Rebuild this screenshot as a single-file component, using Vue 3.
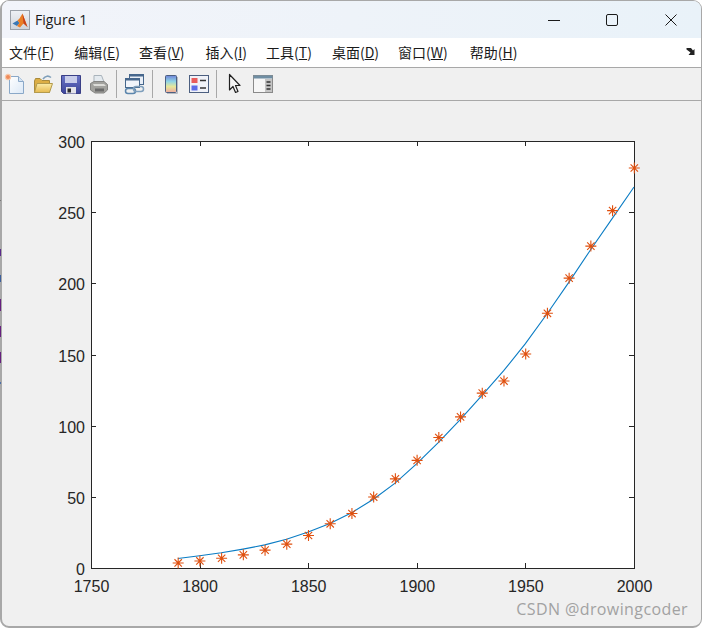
<script setup>
const menus = [
  ['文件', 'F', 20], ['编辑', 'E', 19], ['查看', 'V', 21], ['插入', 'I', 19],
  ['工具', 'T', 20], ['桌面', 'D', 19], ['窗口', 'W', 22], ['帮助', 'H', 0]
]
const X0 = 91, X1 = 634, Y0 = 568, Y1 = 141
const sx = (v) => X0 + ((v - 1750) / 250) * (X1 - X0)
const sy = (v) => Y0 + 0.5 - (v / 300) * (Y0 - Y1)
const xTicks = [1750, 1800, 1850, 1900, 1950, 2000]
const yTicks = [0, 50, 100, 150, 200, 250, 300]
const census = [3.9, 5.3, 7.2, 9.6, 12.9, 17.1, 23.2, 31.4, 38.6, 50.2, 63, 76, 92, 106.5, 123.2, 131.7, 150.7, 179.3, 204, 226.5, 251.4, 281.4]
const fit = [7, 9, 11, 13.6, 16.6, 20.6, 25.6, 31.6, 39.2, 48.6, 60, 73.6, 88.6, 104.6, 121.6, 139, 158, 179, 201, 224, 246, 268]
const years = census.map((_, i) => 1790 + i * 10)
const linePts = fit.map((v, i) => `${sx(years[i]).toFixed(1)},${sy(v).toFixed(1)}`).join(' ')
const markers = census.map((v, i) => ({ x: sx(years[i]) + 0.3, y: sy(v) }))
const bits = [
  { top: 200, height: 1, background: '#777' },
  { top: 249, height: 7, background: '#5b2a8c' },
  { top: 275, height: 7, background: '#3c5f9c' },
  { top: 299, height: 12, background: '#66207f' },
  { top: 326, height: 11, background: '#66207f' },
  { top: 352, height: 11, background: '#66207f' },
  { top: 382, height: 2, background: '#4c6fa8' }
]
</script>

<template>
  <div class="window">
    <div class="titlebar">
      <div class="appicon">
        <svg width="20" height="20" viewBox="0 0 20 20">
          <defs>
            <linearGradient id="appbg" x1="0" y1="0" x2="0" y2="1">
              <stop offset="0" stop-color="#eef1f5" />
              <stop offset="1" stop-color="#cfd4da" />
            </linearGradient>
          </defs>
          <rect x="0.5" y="0.5" width="19" height="19" fill="url(#appbg)" stroke="#9aa0a8" />
          <path d="M2.5 13.5L7.5 10.5L9.5 13L7 16Z" fill="#3b78b4" />
          <path d="M7.5 10.5L9.5 8.5L12.5 3.5L14.5 9L17.5 17L13.5 13.5L10 17.5L7 16L9.5 13Z" fill="#ea7f26" />
          <path d="M12.5 3.5L14.5 9L17.5 17L13.5 13.5Z" fill="#c9431b" />
        </svg>
      </div>
      <span class="title">Figure 1</span>
      <div class="winctl">
        <svg class="ctl" width="12" height="12" viewBox="0 0 12 12"><path d="M0 6.5H12" stroke="#1a1a1a" /></svg>
        <svg class="ctl" width="12" height="12" viewBox="0 0 12 12"><rect x="0.5" y="0.5" width="11" height="11" rx="1.5" fill="none" stroke="#1a1a1a" /></svg>
        <svg class="ctl last" width="12" height="12" viewBox="0 0 12 12"><path d="M0.5 0.5L11.5 11.5M11.5 0.5L0.5 11.5" stroke="#1a1a1a" /></svg>
      </div>
    </div>

    <div class="menubar">
      <span v-for="m in menus" :key="m[1]" class="menu" :style="{ marginRight: m[2] + 'px' }">{{ m[0] }}(<u>{{ m[1] }}</u>)</span>
      <svg class="dock" width="10" height="9" viewBox="0 0 10 9">
        <path d="M0.5 1 L5 1 L7 3.5 L8.5 2 L8.5 8 L2.5 8 L4.5 5.5 L0.5 2.5 Z" fill="#222" />
      </svg>
    </div>

    <div class="toolbar">
      <div class="tool">
        <svg width="22" height="22" viewBox="0 0 22 22">
          <defs>
            <linearGradient id="page" x1="0" y1="0" x2="1" y2="1">
              <stop offset="0" stop-color="#ffffff" />
              <stop offset="1" stop-color="#dbe8f6" />
            </linearGradient>
            <linearGradient id="folder" x1="0" y1="0" x2="0" y2="1">
              <stop offset="0" stop-color="#fbeca8" />
              <stop offset="1" stop-color="#e6b94e" />
            </linearGradient>
            <linearGradient id="disk" x1="0" y1="0" x2="0" y2="1">
              <stop offset="0" stop-color="#6a74c8" />
              <stop offset="1" stop-color="#3d4598" />
            </linearGradient>
          </defs>
          <path d="M5.5 3.5H14.5L19.5 8.5V20.5H5.5Z" fill="url(#page)" stroke="#8aa8c8" />
          <path d="M14.5 3.5V8.5H19.5" fill="#d5e3f2" stroke="#8aa8c8" />
          <circle cx="4" cy="4" r="2.6" fill="#ef8a5a" stroke="#f7c7a8" stroke-width="1.2" />
        </svg>
      </div>
      <div class="tool">
        <svg width="22" height="22" viewBox="0 0 22 22">
          <path d="M2.5 8V19.5H17.5V7.5H10L8 5.5H3.5Z" fill="#dcae44" stroke="#a98a3c" />
          <path d="M2.5 19.5L5 10.5H20.5L17.5 19.5Z" fill="url(#folder)" stroke="#b39a4c" />
          <path d="M11 6C13.5 2.5 16.5 2.5 19 4.5" fill="none" stroke="#7f9fba" stroke-width="1.6" />
        </svg>
      </div>
      <div class="tool">
        <svg width="22" height="22" viewBox="0 0 22 22">
          <path d="M1.5 2.5H20.5V20.5H3.5L1.5 18.5Z" fill="url(#disk)" stroke="#3a3f86" />
          <rect x="5" y="3" width="12" height="7" fill="#c8cdea" />
          <rect x="6" y="14" width="10" height="6.5" fill="#e4e4ea" />
          <rect x="7.5" y="15.5" width="3.5" height="4" fill="#2c2c30" />
        </svg>
      </div>
      <div class="tool">
        <svg width="22" height="22" viewBox="0 0 22 22">
          <path d="M6 9V2.5H13.5L16 9Z" fill="#e4eaef" stroke="#a9b3bb" />
          <path d="M2.5 10.5L6 8.5H16L19.5 11.5V17L16 20H7L2.5 17Z" fill="#a2a29e" stroke="#858583" />
          <path d="M5 11H16L18 13H6Z" fill="#dcdcd8" />
          <rect x="7" y="15.5" width="9" height="3" fill="#6a6a6a" />
        </svg>
      </div>
      <div class="sep"></div>
      <div class="tool">
        <svg width="22" height="22" viewBox="0 0 22 22">
          <rect x="5.5" y="1.5" width="14" height="10" fill="#e8eef6" stroke="#46678c" />
          <rect x="5.5" y="1.5" width="14" height="2" fill="#46678c" />
          <rect x="1.5" y="5.5" width="14" height="9" fill="#f0f4fa" stroke="#46678c" />
          <rect x="1.5" y="5.5" width="14" height="2" fill="#46678c" />
          <rect x="1.5" y="15.5" width="10" height="5" rx="2.5" fill="none" stroke="#5c86ad" stroke-width="1.5" />
          <rect x="9.5" y="13.5" width="10" height="5" rx="2.5" fill="none" stroke="#7f9fbc" stroke-width="1.5" />
        </svg>
      </div>
      <div class="sep"></div>
      <div class="tool">
        <svg width="22" height="22" viewBox="0 0 22 22">
          <defs>
            <linearGradient id="cbar" x1="0" y1="0" x2="0" y2="1">
              <stop offset="0" stop-color="#6f83d8" />
              <stop offset="0.35" stop-color="#8fd4e6" />
              <stop offset="0.65" stop-color="#e6e89a" />
              <stop offset="1" stop-color="#eea9a0" />
            </linearGradient>
          </defs>
          <rect x="5.5" y="2.5" width="11" height="17" rx="1" fill="url(#cbar)" stroke="#4c5f80" />
          <path d="M17.5 4V20.5H7" stroke="#b8bcc2" fill="none" />
        </svg>
      </div>
      <div class="tool">
        <svg width="22" height="22" viewBox="0 0 22 22">
          <rect x="1.5" y="2.5" width="19" height="17" fill="#f0f2f8" stroke="#4c5f80" />
          <rect x="3.5" y="5" width="6" height="5" fill="#e85c5c" />
          <rect x="3.5" y="12.5" width="6" height="5" fill="#5c6ce8" />
          <path d="M12 7.5H18M12 15H18" stroke="#333" stroke-width="1.5" />
        </svg>
      </div>
      <div class="sep"></div>
      <div class="tool">
        <svg width="22" height="22" viewBox="0 0 22 22">
          <path d="M5.5 1.5V17L9 13.5L11.5 19.5L14 18.5L11.5 12.5H16Z" fill="#f4f4f4" stroke="#222" stroke-width="1.2" stroke-linejoin="round" />
        </svg>
      </div>
      <div class="tool">
        <svg width="22" height="22" viewBox="0 0 22 22">
          <rect x="1.5" y="2.5" width="19" height="17" fill="#f6f6f6" stroke="#8a8a8a" />
          <rect x="1.5" y="2.5" width="19" height="3" fill="#6f8ea3" />
          <rect x="13" y="6" width="7" height="13" fill="#c4c4c4" />
          <path d="M14.5 9H18.5M14.5 12.5H18.5M14.5 16H18.5" stroke="#333" stroke-width="1.3" />
        </svg>
      </div>
    </div>

    <div class="canvas">
      <svg class="plot" width="702" height="527" viewBox="0 101 702 527">
        <rect :x="X0" :y="Y1" :width="X1 - X0" :height="Y0 - Y1" fill="#fff" />
        <g stroke="#262626" stroke-width="1" shape-rendering="crispEdges">
          <rect :x="X0 + 0.5" :y="Y1 + 0.5" :width="X1 - X0" :height="Y0 - Y1" fill="none" />
          <g v-for="t in xTicks" :key="'x' + t">
            <path :d="`M${Math.round(sx(t)) + 0.5} ${Y0}v-5M${Math.round(sx(t)) + 0.5} ${Y1}v5`" />
          </g>
          <g v-for="t in yTicks" :key="'y' + t">
            <path :d="`M${X0} ${Math.floor(sy(t)) + 0.5}h5M${X1} ${Math.floor(sy(t)) + 0.5}h-5`" />
          </g>
        </g>
        <polyline :points="linePts" fill="none" stroke="#0a7cc4" stroke-width="1.1" />
        <g stroke="#e0500f" stroke-width="1.1">
          <path v-for="(p, i) in markers" :key="i"
            :d="`M${p.x - 5.5} ${p.y}h11M${p.x} ${p.y - 5.5}v11M${p.x - 3.7} ${p.y - 3.7}l7.4 7.4M${p.x + 3.7} ${p.y - 3.7}l-7.4 7.4`" />
        </g>
        <g class="ticklabel">
          <text v-for="t in xTicks" :key="'lx' + t" :x="sx(t) + 0.5" y="592" text-anchor="middle">{{ t }}</text>
          <text v-for="t in yTicks" :key="'ly' + t" x="85" :y="sy(t) + 6.5" text-anchor="end">{{ t }}</text>
        </g>
      </svg>
      <span class="watermark">CSDN @drowingcoder</span>
    </div>
  </div>
  <i v-for="(b, i) in bits" :key="i" class="bit"
    :style="{ top: b.top + 'px', height: b.height + 'px', background: b.background }"></i>
</template>

<style scoped>
.window {
  position: relative;
  width: 702px;
  height: 628px;
  box-sizing: border-box;
  display: flex;
  flex-direction: column;
  border: 1px solid #a8a8a8;
  border-bottom-width: 2px;
  border-left-width: 2px;
  border-radius: 9px;
  background: #f0f0f0;
  overflow: hidden;
}
.titlebar {
  height: 37px;
  flex: none;
  display: flex;
  align-items: center;
  background: linear-gradient(90deg, #f2f4fa 0%, #eef3f9 50%, #e9f2f9 100%);
}
.appicon {
  margin-left: 8px;
  width: 20px;
  height: 20px;
}
.title {
  margin-left: 5px;
  font: 14px "Open Sans", "Noto Sans", sans-serif;
  color: #1a1a1a;
}
.winctl {
  margin-left: auto;
  display: flex;
  gap: 46px;
  margin-right: 24px;
}
.ctl.last {
  margin-left: 1px;
}
.menubar {
  flex: none;
  display: flex;
  align-items: center;
  padding-left: 7px;
  padding-bottom: 2px;
  box-sizing: border-box;
  height: 30px;
  background: #fff;
  border-bottom: 1px solid #a8a8a8;
  font: 14px "Noto Sans CJK SC", "Noto Sans", sans-serif;
  color: #1a1a1a;
}
.menu {
  white-space: nowrap;
}
.dock {
  margin-left: auto;
  margin-right: 5px;
}
.toolbar {
  height: 32px;
  flex: none;
  display: flex;
  align-items: center;
  background: #f0f0f0;
  border-bottom: 1px solid #a8a8a8;
}
.tool {
  width: 28px;
  height: 22px;
  display: flex;
  justify-content: center;
}
.tool:first-child {
  margin-left: -1px;
}
.sep {
  width: 1px;
  height: 28px;
  background: #a8a8a8;
  margin: 0 4px 0 3px;
}
.canvas {
  position: relative;
  flex: 1;
  min-height: 0;
}
.plot {
  display: block;
  margin-left: -2px;
}
.ticklabel {
  font: 16px "Liberation Sans", Arial, sans-serif;
  fill: #262626;
}
.watermark {
  position: absolute;
  right: 13px;
  bottom: 6px;
  font: 16px "Open Sans", "Noto Sans", sans-serif;
  letter-spacing: 0.4px;
  color: #a2a2a2;
  white-space: nowrap;
}
.bit {
  position: absolute;
  left: 0;
  width: 1px;
}
</style>
